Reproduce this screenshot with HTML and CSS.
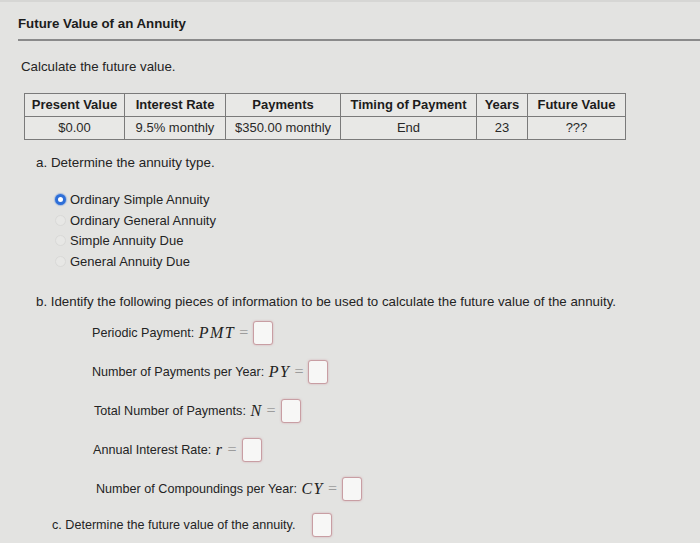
FILE: index.html
```html
<!DOCTYPE html>
<html lang="en">
<head>
<meta charset="utf-8">
<title>Future Value of an Annuity</title>
<link rel="stylesheet" href="styles.css">
</head>
<body>
<div class="page">
  <h1 class="title">Future Value of an Annuity</h1>
  <p class="intro">Calculate the future value.</p>

  <table class="data">
    <colgroup>
      <col class="c1"><col class="c2"><col class="c3"><col class="c4"><col class="c5"><col class="c6">
    </colgroup>
    <tr>
      <th>Present Value</th><th>Interest Rate</th><th>Payments</th><th>Timing of Payment</th><th>Years</th><th>Future Value</th>
    </tr>
    <tr>
      <td>$0.00</td><td>9.5% monthly</td><td>$350.00 monthly</td><td>End</td><td>23</td><td>???</td>
    </tr>
  </table>

  <p class="q qa">a. Determine the annuity type.</p>
  <ul class="radios">
    <li><span class="radio on"></span>Ordinary Simple Annuity</li>
    <li><span class="radio"></span>Ordinary General Annuity</li>
    <li><span class="radio"></span>Simple Annuity Due</li>
    <li><span class="radio"></span>General Annuity Due</li>
  </ul>

  <p class="q qb">b. Identify the following pieces of information to be used to calculate the future value of the annuity.</p>
  <div class="fields">
    <div class="field f1">Periodic Payment: <span class="math">PMT</span><span class="eq">=</span><span class="box"></span></div>
    <div class="field f2">Number of Payments per Year: <span class="math">PY</span><span class="eq">=</span><span class="box"></span></div>
    <div class="field f3">Total Number of Payments: <span class="math">N</span><span class="eq">=</span><span class="box"></span></div>
    <div class="field f4">Annual Interest Rate: <span class="math">r</span><span class="eq">=</span><span class="box"></span></div>
    <div class="field f5">Number of Compoundings per Year: <span class="math">CY</span><span class="eq">=</span><span class="box"></span></div>
  </div>
  <div class="field qc">c. Determine the future value of the annuity.<span class="box gap"></span></div>
</div>
</body>
</html>
```

FILE: styles.css
```css
html, body {
  margin: 0;
  padding: 0;
}
body {
  background: #e3e3e1;
  color: #242424;
  font-family: "Liberation Sans", Arial, sans-serif;
  font-size: 13px;
  height: 543px;
  overflow: hidden;
}
.page {
  padding-left: 18px;
  border-top: 2px solid #d6d6d4;
}
.title {
  margin: 0;
  padding: 13px 0 6px 0;
  font-size: 13.3px;
  line-height: 18px;
  font-weight: bold;
  color: #1c1c1c;
  border-bottom: 2px solid #8a8a8a;
}
.intro {
  margin: 18px 0 0 3px;
  line-height: 16px;
  font-size: 13.3px;
}
.data {
  margin: 18px 0 0 6px;
  border-collapse: collapse;
  table-layout: fixed;
  width: 601px;
  background: #e8e8e6;
  border: 1px solid #6e6e6e;
}
.c1 { width: 100px; }
.c2 { width: 101px; }
.c3 { width: 115px; }
.c4 { width: 136px; }
.c5 { width: 51px; }
.c6 { width: 98px; }
.data th, .data td {
  border: 1px solid #7a7a7a;
  padding: 3px 4px;
  line-height: 16px;
  text-align: center;
  white-space: nowrap;
}
.data th {
  font-weight: bold;
  color: #1c1c1c;
}
.data td {
  color: #282828;
}
.q {
  margin: 15px 0 0 18px;
  line-height: 16px;
}
.qa {
  font-size: 13.4px;
}
.radios {
  list-style: none;
  margin: 18px 0 0 37px;
  padding: 0;
}
.radios li {
  display: flex;
  align-items: center;
  height: 20.7px;
  gap: 4px;
}
.radio {
  width: 9px;
  height: 9px;
  border-radius: 50%;
  border: 1px solid #d9d9d7;
  background: #e7e7e5;
  flex: none;
}
.radio.on {
  width: 5px;
  height: 5px;
  border: 3px solid #2e6fd8;
  background: #ffffff;
  box-shadow: 0 0 1px 1px rgba(46, 111, 216, 0.35);
}
.qb {
  margin-top: 22px;
  font-size: 13.3px;
}
.fields {
  margin: 11px 0 0 74px;
  display: flex;
  flex-direction: column;
  gap: 15px;
}
.field {
  display: flex;
  align-items: center;
  height: 24px;
  white-space: pre;
  font-size: 12.6px;
}
.f2 { margin-left: 0; }
.f3 { margin-left: 2px; }
.f4 { margin-left: 1px; }
.f5 { margin-left: 4px; }
.math {
  font-family: "Liberation Serif", "Times New Roman", serif;
  font-style: italic;
  font-size: 16px;
  letter-spacing: 1.5px;
  color: #222;
  margin-left: 1px;
}
.eq {
  font-family: "Liberation Serif", "Times New Roman", serif;
  font-size: 16px;
  color: #9c9c9c;
  margin: 0 5px 0 4px;
}
.box {
  display: inline-block;
  box-sizing: border-box;
  width: 20px;
  height: 24px;
  border: 1px solid #c89ea3;
  border-radius: 3px;
  background: #f7f7f6;
  box-shadow: 0 0 2px rgba(200, 120, 130, 0.5);
}
.box.gap {
  margin-left: 17px;
}
.qc {
  margin: 12px 0 0 34px;
}
```
